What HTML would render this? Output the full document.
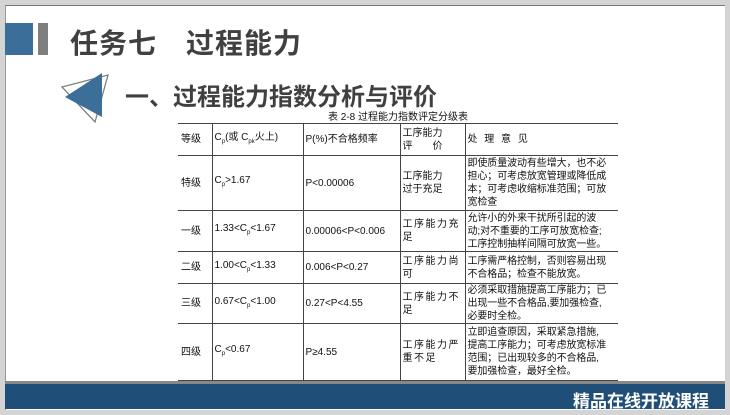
<!DOCTYPE html>
<html><head><meta charset="utf-8"><style>
*{margin:0;padding:0;box-sizing:border-box}
body{width:730px;height:415px;background:#d4d4d4;position:relative;overflow:hidden;font-family:"Liberation Sans","Noto Sans CJK SC",sans-serif}
.slide{position:absolute;left:5px;top:5px;width:720px;height:405px;background:#fff;border-top:1px solid #777;border-left:1px solid #999}
.t1{position:absolute;left:70px;top:22px;font-size:28px;font-weight:bold;color:#404040;letter-spacing:1px;white-space:nowrap}
.t2{position:absolute;left:125px;top:77px;font-size:24px;font-weight:bold;color:#404040;white-space:nowrap}
.cap{position:absolute;left:328px;top:108px;font-size:10px;color:#111;white-space:nowrap}
table{position:absolute;left:178px;top:123px;width:440px;table-layout:fixed;border-collapse:collapse;font-size:10px;color:#111;font-family:"Liberation Sans","Noto Sans CJK SC",sans-serif}
td{border:1px solid #444;padding:0 2px;line-height:13px;vertical-align:middle;overflow:hidden;white-space:nowrap}
td:nth-child(4){letter-spacing:1.5px}
td:nth-child(5){letter-spacing:-0.1px}
tr td:first-child{border-left:none;padding-left:3px}
tr td:last-child{border-right:none}
sub{font-size:6px}
.foot{position:absolute;left:5px;top:381px;width:720px;height:28px;background:#1f4e79;border-top:3px solid #888}
.ft{position:absolute;right:16px;top:3px;color:#fff;font-size:17px;font-weight:bold;white-space:nowrap}
</style></head><body>
<div class="slide"></div>
<div style="position:absolute;left:5px;top:23px;width:28px;height:32px;background:#3c6e9a"></div>
<div style="position:absolute;left:38px;top:23px;width:10px;height:32px;background:#7f7f7f"></div>
<div class="t1">任务七　过程能力</div>
<svg style="position:absolute;left:0;top:0" width="130" height="130">
<polygon points="62,87 108,75 95,122" fill="none" stroke="#808080" stroke-width="1.3"/>
<polygon points="65,97 102,73 102,117" fill="#3c6e9a"/>
</svg>
<div class="t2">一、过程能力指数分析与评价</div>
<div class="cap">表 2-8 过程能力指数评定分级表</div>
<table>
<colgroup><col style="width:34px"><col style="width:91px"><col style="width:97px"><col style="width:65px"><col style="width:153px"></colgroup>
<tr style="height:32px"><td>等级</td><td>C<sub>p</sub>(或 C<sub>pk</sub>火上)</td><td>P(%)不合格频率</td><td style="letter-spacing:0">工序能力<br>评　　价</td><td style="letter-spacing:2px">处 理 意 见</td></tr>
<tr style="height:55px"><td>特级</td><td>C<sub>p</sub>&gt;1.67</td><td>P&lt;0.00006</td><td style="letter-spacing:0">工序能力<br>过于充足</td><td>即使质量波动有些增大，也不必<br>担心；可考虑放宽管理或降低成<br>本；可考虑收缩标准范围；可放<br>宽检查</td></tr>
<tr style="height:41px"><td>一级</td><td>1.33&lt;C<sub>p</sub>&lt;1.67</td><td>0.00006&lt;P&lt;0.006</td><td>工序能力充<br>足</td><td>允许小的外来干扰所引起的波<br>动;对不重要的工序可放宽检查;<br>工序控制抽样间隔可放宽一些。</td></tr>
<tr style="height:32px"><td>二级</td><td>1.00&lt;C<sub>p</sub>&lt;1.33</td><td>0.006&lt;P&lt;0.27</td><td>工序能力尚<br>可</td><td>工序需严格控制，否则容易出现<br>不合格品；检查不能放宽。</td></tr>
<tr style="height:40px"><td>三级</td><td>0.67&lt;C<sub>p</sub>&lt;1.00</td><td>0.27&lt;P&lt;4.55</td><td>工序能力不<br>足</td><td>必须采取措施提高工序能力；已<br>出现一些不合格品,要加强检查,<br>必要时全检。</td></tr>
<tr style="height:57px"><td>四级</td><td>C<sub>p</sub>&lt;0.67</td><td>P≥4.55</td><td>工序能力严<br>重不足</td><td>立即追查原因，采取紧急措施,<br>提高工序能力；可考虑放宽标准<br>范围；已出现较多的不合格品,<br>要加强检查，最好全检。</td></tr>
</table>
<div class="foot"><div class="ft">精品在线开放课程</div></div>
</body></html>
